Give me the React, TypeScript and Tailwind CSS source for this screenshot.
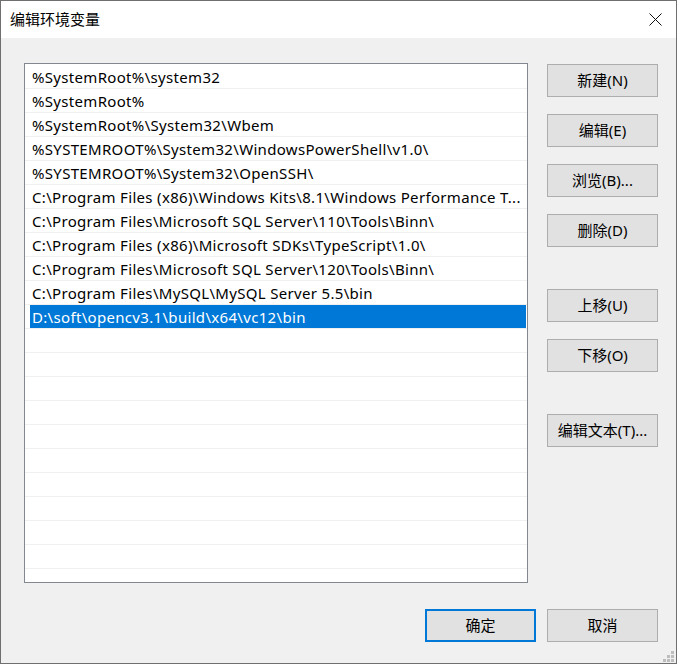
const paths = [
  '%SystemRoot%\\system32',
  '%SystemRoot%',
  '%SystemRoot%\\System32\\Wbem',
  '%SYSTEMROOT%\\System32\\WindowsPowerShell\\v1.0\\',
  '%SYSTEMROOT%\\System32\\OpenSSH\\',
  'C:\\Program Files (x86)\\Windows Kits\\8.1\\Windows Performance T...',
  'C:\\Program Files\\Microsoft SQL Server\\110\\Tools\\Binn\\',
  'C:\\Program Files (x86)\\Microsoft SDKs\\TypeScript\\1.0\\',
  'C:\\Program Files\\Microsoft SQL Server\\120\\Tools\\Binn\\',
  'C:\\Program Files\\MySQL\\MySQL Server 5.5\\bin',
  'D:\\soft\\opencv3.1\\build\\x64\\vc12\\bin',
];

const selected = 10;
const rows = Array.from({ length: 22 }, (_, i) => paths[i] ?? '');

const font = { fontFamily: '"Noto Sans", "Noto Sans CJK SC", sans-serif' };

function Btn({ label, primary }: { label: string; primary?: boolean }) {
  return (
    <button
      className={
        primary
          ? 'w-[111px] h-[33px] bg-[#e1e1e1] border-2 border-[#0078d7] text-[15px] text-black'
          : 'w-[111px] h-[33px] bg-[#e1e1e1] border border-[#adadad] text-[15px] text-black'
      }
    >
      {label}
    </button>
  );
}

export default function App() {
  return (
    <div className="w-[677px] h-[664px] border border-[#6f6f6f] bg-[#f0f0f0] flex flex-col relative" style={font}>
      {/* Title bar */}
      <div className="h-[37px] bg-white flex items-center justify-between pl-[9px] pr-[14px]">
        <span className="text-[15px] text-black">编辑环境变量</span>
        <svg width="13" height="13" viewBox="0 0 13 13" className="mt-[-1px]">
          <path d="M0.5 0.5 L12.5 12.5 M12.5 0.5 L0.5 12.5" stroke="#111" strokeWidth="1" fill="none" />
        </svg>
      </div>

      {/* Body */}
      <div className="flex pl-[23px] pt-[25px]">
        <div className="w-[504px] h-[520px] border border-[#828790] bg-white pt-[1px] overflow-hidden">
          {rows.map((p, i) => (
            <div key={i} className="h-[24px] border-b border-[#f0f0f0] pl-[1px] pr-[1px]">
              <div
                className={
                  i === selected
                    ? 'h-full ml-[4px] bg-[#0078d7] text-white text-[15px] leading-[24px] tracking-[0.32px] pl-[2px] whitespace-nowrap'
                    : 'h-full ml-[4px] text-black text-[15px] leading-[24px] tracking-[0.32px] pl-[2px] whitespace-nowrap'
                }
              >
                {p}
              </div>
            </div>
          ))}
        </div>

        <div className="ml-[19px] mt-[1px] flex flex-col">
          <Btn label="新建(N)" />
          <div className="h-[17px]" />
          <Btn label="编辑(E)" />
          <div className="h-[17px]" />
          <Btn label="浏览(B)..." />
          <div className="h-[17px]" />
          <Btn label="删除(D)" />
          <div className="h-[42px]" />
          <Btn label="上移(U)" />
          <div className="h-[17px]" />
          <Btn label="下移(O)" />
          <div className="h-[42px]" />
          <Btn label="编辑文本(T)..." />
        </div>
      </div>

      {/* Footer buttons */}
      <div className="flex justify-end gap-[11px] pr-[18px] mt-[26px]">
        <Btn label="确定" primary />
        <Btn label="取消" />
      </div>

      {/* Resize grip */}
      <svg width="12" height="12" viewBox="0 0 12 12" className="absolute right-[2px] bottom-[1px]">
        <g fill="#bdbdbd">
          <rect x="9" y="1" width="3" height="3" />
          <rect x="5" y="5" width="3" height="3" />
          <rect x="9" y="5" width="3" height="3" />
          <rect x="1" y="9" width="3" height="3" />
          <rect x="5" y="9" width="3" height="3" />
          <rect x="9" y="9" width="3" height="3" />
        </g>
      </svg>
    </div>
  );
}
